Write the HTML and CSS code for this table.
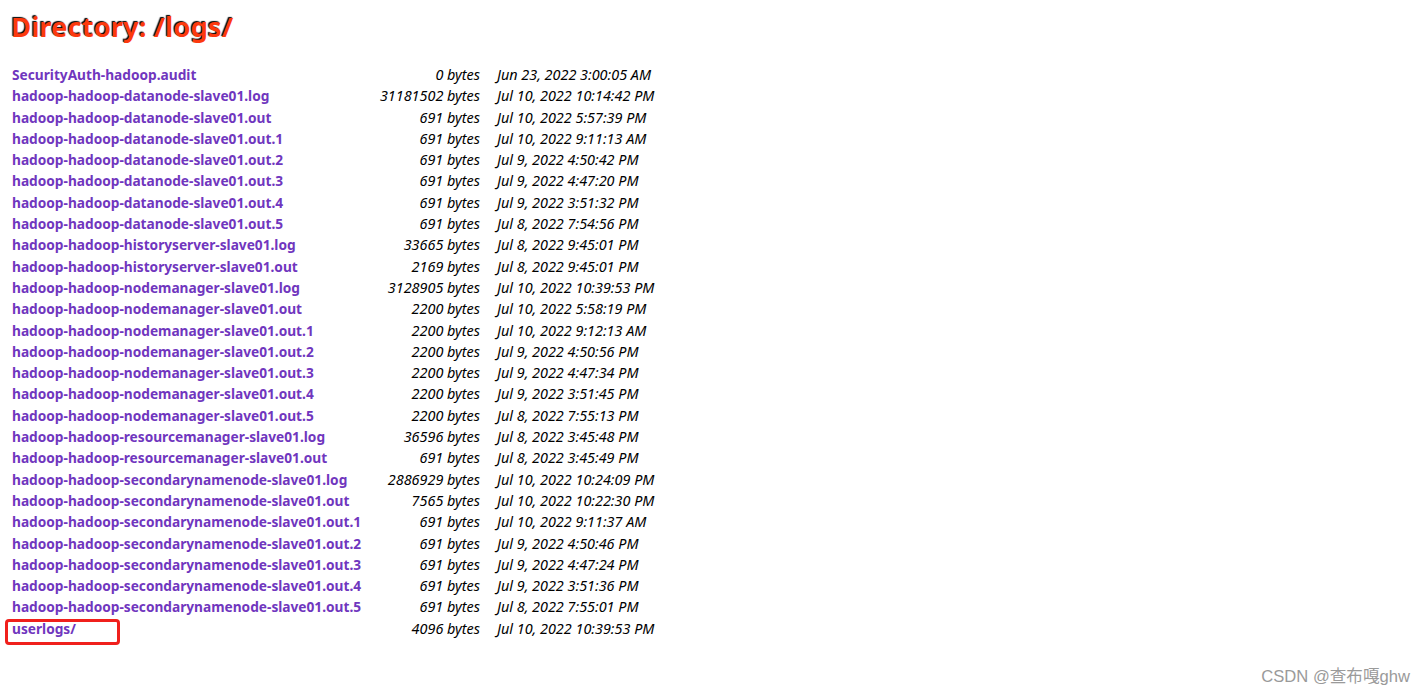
FILE: index.html
```html
<!DOCTYPE html>
<html>
<head>
<meta charset="utf-8">
<title>Directory: /logs/</title>
<link rel="stylesheet" href="styles.css">
</head>
<body>
<h1 class="title">Directory: /logs/</h1>
<table class="listing">
<tr><td class="name"><a href="#">SecurityAuth-hadoop.audit</a></td><td class="size">0 bytes</td><td class="date">Jun 23, 2022 3:00:05 AM</td></tr>
<tr><td class="name"><a href="#">hadoop-hadoop-datanode-slave01.log</a></td><td class="size">31181502 bytes</td><td class="date">Jul 10, 2022 10:14:42 PM</td></tr>
<tr><td class="name"><a href="#">hadoop-hadoop-datanode-slave01.out</a></td><td class="size">691 bytes</td><td class="date">Jul 10, 2022 5:57:39 PM</td></tr>
<tr><td class="name"><a href="#">hadoop-hadoop-datanode-slave01.out.1</a></td><td class="size">691 bytes</td><td class="date">Jul 10, 2022 9:11:13 AM</td></tr>
<tr><td class="name"><a href="#">hadoop-hadoop-datanode-slave01.out.2</a></td><td class="size">691 bytes</td><td class="date">Jul 9, 2022 4:50:42 PM</td></tr>
<tr><td class="name"><a href="#">hadoop-hadoop-datanode-slave01.out.3</a></td><td class="size">691 bytes</td><td class="date">Jul 9, 2022 4:47:20 PM</td></tr>
<tr><td class="name"><a href="#">hadoop-hadoop-datanode-slave01.out.4</a></td><td class="size">691 bytes</td><td class="date">Jul 9, 2022 3:51:32 PM</td></tr>
<tr><td class="name"><a href="#">hadoop-hadoop-datanode-slave01.out.5</a></td><td class="size">691 bytes</td><td class="date">Jul 8, 2022 7:54:56 PM</td></tr>
<tr><td class="name"><a href="#">hadoop-hadoop-historyserver-slave01.log</a></td><td class="size">33665 bytes</td><td class="date">Jul 8, 2022 9:45:01 PM</td></tr>
<tr><td class="name"><a href="#">hadoop-hadoop-historyserver-slave01.out</a></td><td class="size">2169 bytes</td><td class="date">Jul 8, 2022 9:45:01 PM</td></tr>
<tr><td class="name"><a href="#">hadoop-hadoop-nodemanager-slave01.log</a></td><td class="size">3128905 bytes</td><td class="date">Jul 10, 2022 10:39:53 PM</td></tr>
<tr><td class="name"><a href="#">hadoop-hadoop-nodemanager-slave01.out</a></td><td class="size">2200 bytes</td><td class="date">Jul 10, 2022 5:58:19 PM</td></tr>
<tr><td class="name"><a href="#">hadoop-hadoop-nodemanager-slave01.out.1</a></td><td class="size">2200 bytes</td><td class="date">Jul 10, 2022 9:12:13 AM</td></tr>
<tr><td class="name"><a href="#">hadoop-hadoop-nodemanager-slave01.out.2</a></td><td class="size">2200 bytes</td><td class="date">Jul 9, 2022 4:50:56 PM</td></tr>
<tr><td class="name"><a href="#">hadoop-hadoop-nodemanager-slave01.out.3</a></td><td class="size">2200 bytes</td><td class="date">Jul 9, 2022 4:47:34 PM</td></tr>
<tr><td class="name"><a href="#">hadoop-hadoop-nodemanager-slave01.out.4</a></td><td class="size">2200 bytes</td><td class="date">Jul 9, 2022 3:51:45 PM</td></tr>
<tr><td class="name"><a href="#">hadoop-hadoop-nodemanager-slave01.out.5</a></td><td class="size">2200 bytes</td><td class="date">Jul 8, 2022 7:55:13 PM</td></tr>
<tr><td class="name"><a href="#">hadoop-hadoop-resourcemanager-slave01.log</a></td><td class="size">36596 bytes</td><td class="date">Jul 8, 2022 3:45:48 PM</td></tr>
<tr><td class="name"><a href="#">hadoop-hadoop-resourcemanager-slave01.out</a></td><td class="size">691 bytes</td><td class="date">Jul 8, 2022 3:45:49 PM</td></tr>
<tr><td class="name"><a href="#">hadoop-hadoop-secondarynamenode-slave01.log</a></td><td class="size">2886929 bytes</td><td class="date">Jul 10, 2022 10:24:09 PM</td></tr>
<tr><td class="name"><a href="#">hadoop-hadoop-secondarynamenode-slave01.out</a></td><td class="size">7565 bytes</td><td class="date">Jul 10, 2022 10:22:30 PM</td></tr>
<tr><td class="name"><a href="#">hadoop-hadoop-secondarynamenode-slave01.out.1</a></td><td class="size">691 bytes</td><td class="date">Jul 10, 2022 9:11:37 AM</td></tr>
<tr><td class="name"><a href="#">hadoop-hadoop-secondarynamenode-slave01.out.2</a></td><td class="size">691 bytes</td><td class="date">Jul 9, 2022 4:50:46 PM</td></tr>
<tr><td class="name"><a href="#">hadoop-hadoop-secondarynamenode-slave01.out.3</a></td><td class="size">691 bytes</td><td class="date">Jul 9, 2022 4:47:24 PM</td></tr>
<tr><td class="name"><a href="#">hadoop-hadoop-secondarynamenode-slave01.out.4</a></td><td class="size">691 bytes</td><td class="date">Jul 9, 2022 3:51:36 PM</td></tr>
<tr><td class="name"><a href="#">hadoop-hadoop-secondarynamenode-slave01.out.5</a></td><td class="size">691 bytes</td><td class="date">Jul 8, 2022 7:55:01 PM</td></tr>
<tr><td class="name marked"><a href="#">userlogs/</a><span class="mark"></span></td><td class="size">4096 bytes</td><td class="date">Jul 10, 2022 10:39:53 PM</td></tr>
</table>
<div class="watermark">CSDN @查布嘎ghw</div>
</body>
</html>
```
FILE: styles.css
```css
html, body {
  margin: 0;
  padding: 0;
  background: #ffffff;
}
body {
  font-family: "Noto Sans", "Noto Sans CJK SC", sans-serif;
  padding: 8px 11px;
  height: 696px;
  box-sizing: border-box;
  position: relative;
  overflow: hidden;
}
.title {
  margin: 0;
  font-size: 27.5px;
  line-height: 38px;
  font-weight: bold;
  color: #fc390e;
  text-shadow: -1px -1px 1px #000000;
}
.listing {
  margin-top: 18px;
  border-collapse: collapse;
  font-size: 14.4px;
  line-height: 17.3px;
}
.listing td {
  padding: 2px 0;
  font-style: italic;
  color: #000;
  white-space: nowrap;
}
.listing a {
  color: #7036be;
  font-weight: bold;
  font-style: normal;
  text-decoration: none;
  font-size: 13.7px;
  padding-left: 1px;
}
.name {
  width: 355px;
  position: relative;
}
.size {
  width: 114px;
  text-align: right;
  padding-right: 17px !important;
}
.date {
  text-align: left;
}
.mark {
  position: absolute;
  left: -6px;
  top: 1px;
  width: 109px;
  height: 20px;
  border: 3px solid #f0201c;
  border-radius: 4px;
}
.watermark {
  position: absolute;
  right: 15px;
  bottom: 9px;
  font-family: "Liberation Sans", "Noto Sans CJK SC", sans-serif;
  font-size: 16.6px;
  color: #9a9a9a;
}
```
